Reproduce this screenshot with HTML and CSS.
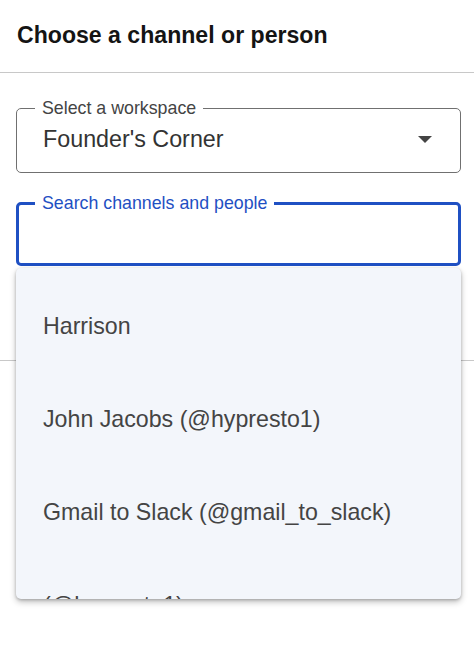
FILE: index.html
```html
<!DOCTYPE html>
<html lang="en">
<head>
<meta charset="utf-8">
<title>Choose a channel or person</title>
<link rel="stylesheet" href="styles.css">
</head>
<body>
<div class="dialog">
  <header class="dialog-header">
    <h2 class="dialog-title">Choose a channel or person</h2>
  </header>
  <div class="dialog-body">
    <fieldset class="field field-select">
      <legend class="field-label">Select a workspace</legend>
      <div class="select-row">
        <span class="select-value">Founder's Corner</span>
        <svg class="select-arrow" width="14" height="7" viewBox="0 0 14 7"><path d="M0 0h14L7 7z" fill="#444"/></svg>
      </div>
    </fieldset>
    <div class="search-wrap">
      <fieldset class="field field-search">
        <legend class="field-label label-focus">Search channels and people</legend>
        <input class="search-input" type="text" aria-label="Search channels and people">
      </fieldset>
      <ul class="menu">
        <li class="menu-item">Harrison</li>
        <li class="menu-item">John Jacobs (@hypresto1)</li>
        <li class="menu-item">Gmail to Slack (@gmail_to_slack)</li>
        <li class="menu-item">(@hypresto1)</li>
      </ul>
    </div>
  </div>
  <footer class="dialog-footer"></footer>
</div>
</body>
</html>
```

FILE: styles.css
```css
html, body {
  margin: 0;
  padding: 0;
  background: #fff;
}
body {
  font-family: "Liberation Sans", Arial, sans-serif;
  color: #222;
}
.dialog {
  width: 474px;
  height: 667px;
  overflow: hidden;
}
.dialog-header {
  height: 72px;
  border-bottom: 1px solid #c8c8c8;
  display: flex;
  align-items: center;
  padding: 0 17px;
  box-sizing: content-box;
}
.dialog-title {
  margin: 0;
  font-size: 23.1px;
  font-weight: 700;
  color: #141414;
  position: relative;
  top: -1px;
}
.dialog-body {
  padding: 25px 13px 0 16px;
  height: 262px;
}
.field {
  margin: 0;
  border-radius: 5px;
  min-width: 0;
}
.field-label {
  font-size: 17.8px;
  padding: 0 7px;
  line-height: 20px;
}
.field-select {
  border: 1.5px solid #707070;
  padding: 0 28px 0 18px;
  height: 75px;
  box-sizing: border-box;
}
.field-select .field-label {
  color: #444;
}
.select-row {
  display: flex;
  align-items: center;
  justify-content: space-between;
  padding-left: 8px;
  margin-top: 8px;
}
.select-value {
  font-size: 23.3px;
  color: #333;
}
.select-arrow {
  display: block;
}
.search-wrap {
  position: relative;
  margin-top: 20px;
}
.field-search {
  border: 3.5px solid #1f50c3;
  padding: 0 18px 0 16px;
  height: 73px;
  box-sizing: border-box;
}
.label-focus {
  color: #1f50c3;
}
.search-input {
  border: 0;
  outline: none;
  background: transparent;
  width: 100%;
  font: inherit;
  font-size: 20px;
  height: 30px;
}
.menu {
  position: absolute;
  left: 0;
  right: 0;
  top: 75px;
  height: 331px;
  margin: 0;
  padding: 12px 0 0;
  list-style: none;
  background: #f3f6fb;
  border-radius: 5px;
  box-shadow: 0 3px 6px rgba(0,0,0,0.25), 0 1px 3px rgba(0,0,0,0.2);
  overflow: hidden;
  box-sizing: border-box;
}
.menu-item {
  height: 93px;
  display: flex;
  align-items: center;
  padding-left: 27px;
  font-size: 23.2px;
  color: #444;
}
.dialog-footer {
  border-top: 1px solid #c8c8c8;
}
```
